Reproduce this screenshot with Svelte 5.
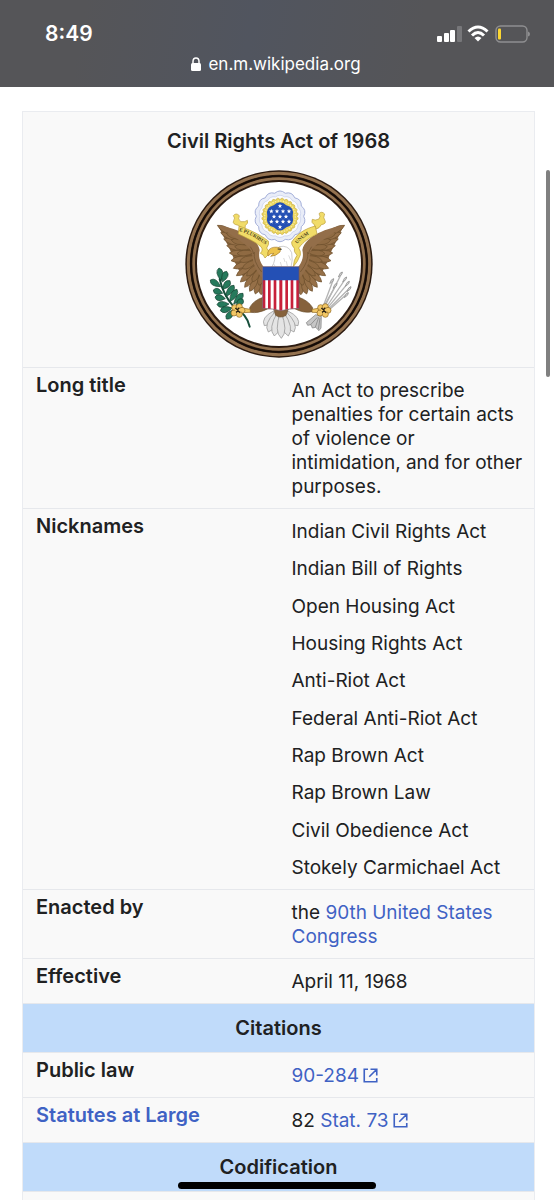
<script lang="ts">
  type Line = [number, number, number, number];

  const nicknames = [
    "Indian Civil Rights Act",
    "Indian Bill of Rights",
    "Open Housing Act",
    "Housing Rights Act",
    "Anti-Riot Act",
    "Federal Anti-Riot Act",
    "Rap Brown Act",
    "Rap Brown Law",
    "Civil Obedience Act",
    "Stokely Carmichael Act"
  ];

  // seal geometry, root -> tip
  const longFeathers: Line[] = [
    [250, 345, 246, 390], [245, 335, 229, 388], [242, 325, 212, 380],
    [238, 315, 197, 368], [235, 305, 184, 352], [232, 295, 172, 333],
    [228, 285, 163, 311], [224, 276, 156, 288], [220, 266, 151, 265],
    [215, 255, 143, 243], [208, 245, 134, 223], [200, 232, 125, 204],
    [190, 222, 115, 182]
  ];
  const shortFeathers: Line[] = [
    [252, 320, 240, 362], [246, 306, 220, 352], [243, 295, 203, 334],
    [240, 284, 190, 312], [236, 274, 182, 290], [230, 262, 174, 267],
    [222, 250, 167, 246], [210, 238, 157, 226], [195, 224, 142, 205]
  ];
  const tailFeathers: Line[] = [
    [285, 438, 256, 483], [325, 438, 357, 483], [290, 440, 268, 502],
    [320, 440, 345, 502], [296, 442, 286, 514], [314, 442, 328, 514],
    [305, 440, 307, 521]
  ];
  const leaves: Line[] = [
    [127, 348, 120, 310], [130, 352, 143, 320], [125, 366, 94, 346],
    [131, 374, 153, 348], [131, 386, 103, 376], [140, 396, 165, 362],
    [139, 402, 108, 397], [152, 412, 174, 374], [150, 418, 114, 420],
    [164, 418, 192, 386], [160, 430, 124, 438], [166, 434, 142, 463],
    [172, 424, 192, 404]
  ];
  const arrows: Line[] = [
    [424, 448, 464, 342], [426, 448, 490, 322], [428, 448, 503, 337],
    [430, 449, 511, 350], [431, 450, 516, 366], [432, 452, 508, 384],
    [422, 447, 474, 356]
  ];
  const stars = [
    [303, 124], [277, 140], [294, 140], [312, 140], [330, 140],
    [285, 156], [303, 156], [321, 156],
    [277, 171], [294, 171], [312, 171], [330, 171], [303, 187]
  ];

  function feather([x1, y1, x2, y2]: Line, w: number) {
    const len = Math.hypot(x2 - x1, y2 - y1);
    const nx = (-(y2 - y1) / len) * w;
    const ny = ((x2 - x1) / len) * w;
    const mx = x1 + (x2 - x1) * 0.75;
    const my = y1 + (y2 - y1) * 0.75;
    return `M${x1} ${y1}Q${mx + nx} ${my + ny} ${x2} ${y2}Q${mx - nx} ${my - ny} ${x1} ${y1}Z`;
  }

  function star(cx: number, cy: number) {
    const pts = [];
    for (let i = 0; i < 10; i++) {
      const r = i % 2 ? 3 : 7;
      const a = (i * Math.PI) / 5;
      pts.push(`${cx + r * Math.sin(a)},${cy - r * Math.cos(a)}`);
    }
    return pts.join(" ");
  }

  // scalloped circle used for the cloud, the rays and the blue field
  function scallop(cx: number, cy: number, r: number, n: number, bump: number) {
    let d = "";
    for (let i = 0; i <= n; i++) {
      const a = (i * 2 * Math.PI) / n;
      const m = a - Math.PI / n;
      const x = cx + r * Math.cos(a);
      const y = cy + r * Math.sin(a);
      d += i ? `Q${cx + (r + bump) * Math.cos(m)} ${cy + (r + bump) * Math.sin(m)} ${x} ${y}` : `M${x} ${y}`;
    }
    return d + "Z";
  }
</script>

{#snippet wing()}
  <path d="M117 182C165 195 226 220 238 262C236 285 246 300 256 318V385C215 372 175 325 160 270Z" fill="#86623c" />
  <g fill="#967048" stroke="#6b4e2c" stroke-width="2">
    {#each longFeathers as f}<path d={feather(f, 17)} />{/each}
  </g>
  <g fill="#8f6a42" stroke="#6b4e2c" stroke-width="2">
    {#each shortFeathers as f}<path d={feather(f, 17)} />{/each}
  </g>
  <path d="M117 182C165 190 232 212 242 256C236 280 246 296 258 312L250 340C228 318 218 284 220 264C200 232 150 210 117 182Z" fill="#936e49" />
  <path d="M226 262q-4 28 22 60M214 246q8 12 10 22" fill="none" stroke="#6b4e2c" stroke-width="2" />
{/snippet}

{#snippet talon(x: number)}
  <g transform="translate({x} 438)" fill="#f2c765" stroke="#8a6420" stroke-width="2">
    <circle cx="-10" cy="-9" r="9" /><circle cx="4" cy="-12" r="9" />
    <circle cx="12" cy="-1" r="9" /><circle cx="-12" cy="7" r="9" />
    <circle cx="4" cy="11" r="9" /><circle cx="0" cy="0" r="9" stroke="none" />
    <path d="M-8-8l6 5l6-6M-6 5l6-4l7 5M0-3v6" fill="none" stroke="#231c10" stroke-width="4" />
  </g>
{/snippet}

{#snippet external()}
  <svg class="external" viewBox="0 0 12 12" aria-hidden="true">
    <path d="M4 1H1v10h10V8M6 1h5v5M11 1L5 7" fill="none" stroke="currentColor" stroke-width="1.3" />
  </svg>
{/snippet}

<div class="screen">
  <header>
    <div class="status">
      <time>8:49</time>
      <div class="indicators">
        <svg width="25" height="16" viewBox="0 0 25 16" aria-label="Signal">
          <g fill="#fff">
            <rect y="10" width="5" height="6" rx="1" />
            <rect x="7" y="7" width="5" height="9" rx="1" />
            <rect x="13" y="4" width="5" height="12" rx="1" />
          </g>
          <rect x="20" width="5" height="16" rx="1" fill="#77777a" />
        </svg>
        <svg width="22" height="17" viewBox="0 0 22 17" aria-label="Wi-Fi">
          <g fill="none" stroke="#fff" stroke-width="3">
            <path d="M1.500 6.500Q11-2.500 20.500 6.500" />
            <path d="M5 10.500Q11 4.500 17 10.500" />
          </g>
          <path d="M7.500 13Q11 10 14.500 13L11 16.500Z" fill="#fff" />
        </svg>
        <svg width="36" height="18" viewBox="0 0 36 18" aria-label="Battery">
          <rect x="2" y="1" width="31" height="16" rx="4.500" fill="none" stroke="#8f8f91" stroke-width="1.400" />
          <rect x="4" y="3.500" width="3" height="11" rx="1" fill="#fbd632" />
          <path d="M34 6.500q2 .5 2 2.500t-2 2.500z" fill="#8f8f91" />
        </svg>
      </div>
    </div>
    <div class="address">
      <svg width="10" height="15" viewBox="0 0 10 15" aria-hidden="true">
        <rect y="6" width="10" height="8" rx="1.500" fill="#fff" />
        <path d="M2 7V4.500a3 3.500 0 0 1 6 0V7" fill="none" stroke="#fff" stroke-width="1.500" />
      </svg>
      <span>en.m.wikipedia.org</span>
    </div>
  </header>

  <main>
    <table>
      <tbody>
        <tr>
          <th class="title" colspan="2" scope="colgroup">
            Civil Rights Act of 1968
            <svg class="seal" viewBox="18 16 564 564" role="img" aria-label="Great Seal of the United States">
              <circle cx="300" cy="298" r="281" fill="#2b1a10" />
              <g fill="none" stroke="#94724f">
                <circle cx="300" cy="298" r="272" stroke-width="9" />
                <circle cx="300" cy="298" r="256" stroke-width="8" />
              </g>
              <circle cx="300" cy="298" r="264" fill="none" stroke="#140b06" stroke-width="5" />
              <circle cx="300" cy="298" r="246" fill="#fff" />

              <path d={scallop(303, 155, 71, 14, 12)} fill="#e9edf8" stroke="#a5b0da" stroke-width="3" />
              <path d={scallop(303, 155, 60, 14, 8)} fill="#fafbff" stroke="#c3cbe8" stroke-width="2" />
              <path d={scallop(303, 155, 50, 24, 10)} fill="#ead45f" stroke="#c8ad3d" stroke-width="2" />
              <circle cx="303" cy="155" r="46" fill="none" stroke="#f8eda5" stroke-width="4" stroke-dasharray="4 4" />
              <path d={scallop(303, 155, 38, 6, 14)} fill="#2450b5" />
              {#each stars as [x, y]}<polygon points={star(x, y)} fill="#fff" />{/each}

              {@render wing()}
              <g transform="matrix(-1 0 0 1 612 0)">{@render wing()}</g>

              <g fill="#f1dc68" stroke="#b99b36" stroke-width="2">
                <path d="M163 153q8-10 18 0q-6 10 4 18q14 2 20-4q4 10-6 15l-1 12q-14-2-20-12q-20-4-14-14q6-8-1-15z" />
                <path d="M180 184C205 193 238 206 268 229Q272 238 263 250Q266 258 276 266Q266 270 258 280Q253 268 244 266Q254 256 246 246C225 228 200 219 178 208Z" />
                <path d="M437 148q-9-10-17-1q6 8 0 16q-12 6-20 1q-4 12 6 15l3 15q13-3 18-14q16-3 11-12q-7-9-1-20z" />
                <path d="M409 184C378 192 355 207 338 232Q336 240 346 251Q343 261 354 272Q344 285 343 306Q356 292 364 271Q366 260 359 250C374 230 392 219 414 208Z" />
              </g>
              <path id="motto-left" d="M180 199Q226 212 270 249" fill="none" />
              <path id="motto-right" d="M354 238Q376 212 414 199" fill="none" />
              <g class="motto">
                <text><textPath href="#motto-left">E PLURIBUS</textPath></text>
                <text><textPath href="#motto-right">UNUM</textPath></text>
              </g>

              <path d="M278 308Q292 284 286 266L300 246Q328 240 338 264Q342 286 336 308Z" fill="#fff" stroke="#b5b5b5" stroke-width="2" />
              <path d="M284 298l5 8M304 292l4 14M322 290l3 14M329 272l6 15M314 280l4 12" stroke="#c9c9c9" stroke-width="2" />
              <path d="M305 250Q282 243 270 255Q264 264 267 274Q274 265 285 266L275 275Q292 274 303 262Z" fill="#edc34c" stroke="#a67a24" stroke-width="2" />
              <path d="M296 253l12 1" stroke="#333" stroke-width="3" />

              <g fill="#e4e4e4" stroke="#8d8d8d" stroke-width="2">
                {#each tailFeathers as f}<path d={feather(f, 23)} />{/each}
              </g>
              <path d="M252 398Q222 408 212 429L214 443Q238 447 267 432L284 431L290 452Q305 462 321 452L328 432L345 431Q374 447 399 441L401 429Q388 408 360 398Z" fill="#86623c" stroke="#6b4e2c" stroke-width="2" />
              <path d="M189 430l25 4v9l-25 1zM424 430l-25 4v9l25 1z" fill="#f2c765" stroke="#8a6420" stroke-width="2" />

              <path d="M251 306H360V431Q330 432 306 438Q282 432 251 431Z" fill="#fff" />
              <g fill="#c8203a">
                <path d="M251 346h8v85h-8zM267 346h8v86h-8zM284 346h8v89l-8-1zM301 346h9v91l-4 1l-5-1zM319 346h8v88l-8 1zM335 346h8v86h-8zM352 346h8v85h-8z" />
              </g>
              <path d="M251 306H360V347H251Z" fill="#2450b5" />
              <path d="M251 306H360V431Q330 432 306 438Q282 432 251 431Z" fill="none" stroke="#6e5360" stroke-width="2" />

              <path d="M122 343Q132 390 164 426Q205 450 212 486" fill="none" stroke="#174f3b" stroke-width="6" stroke-linecap="round" />
              <g fill="#267a5c" stroke="#103c2c" stroke-width="2">
                {#each leaves as l}<path d={feather(l, 18)} />{/each}
              </g>

              {#each arrows as a}
                <path d="M{a[0]} {a[1]}L{a[2]} {a[3]}" stroke="#b4b4b4" stroke-width="4" />
                <path d={feather([a[2] - 12, a[3] + 15, a[2], a[3]], 6)} fill="#d7d7d7" stroke="#8a8a8a" stroke-width="2" />
              {/each}
              <path d="M410 450L382 474L386 482L396 480L400 490L410 488L420 498L426 490L427 455Z" fill="#c6c6c6" stroke="#777" stroke-width="2" />
              <path d="M415 458l-20 22M419 458l-10 30M423 460l-5 34" stroke="#777" stroke-width="2" />
              {@render talon(177)}
              {@render talon(435)}
            </svg>
          </th>
        </tr>
        <tr>
          <th scope="row">Long title</th>
          <td>An Act to prescribe penalties for certain acts of violence or intimidation, and for other purposes.</td>
        </tr>
        <tr>
          <th scope="row">Nicknames</th>
          <td>
            <ul>
              {#each nicknames as name (name)}
                <li>{name}</li>
              {/each}
            </ul>
          </td>
        </tr>
        <tr>
          <th scope="row">Enacted by</th>
          <td>the <a href="#congress">90th United States Congress</a></td>
        </tr>
        <tr>
          <th scope="row">Effective</th>
          <td>April 11, 1968</td>
        </tr>
        <tr>
          <th class="section" colspan="2" scope="colgroup">Citations</th>
        </tr>
        <tr>
          <th scope="row">Public law</th>
          <td><a href="#public-law">90-284{@render external()}</a></td>
        </tr>
        <tr>
          <th scope="row"><a href="#statutes">Statutes at Large</a></th>
          <td>82 <a href="#stat">Stat.</a> <a href="#stat-73">73{@render external()}</a></td>
        </tr>
        <tr>
          <th class="section" colspan="2" scope="colgroup">Codification</th>
        </tr>
        <tr>
          <td class="rest" colspan="2"></td>
        </tr>
      </tbody>
    </table>
  </main>

  <div class="scrollbar"></div>
  <div class="home"></div>
</div>

<style>
  :global(body) {
    margin: 0;
    background: #fff;
  }
  .screen {
    position: relative;
    height: 100vh;
    overflow: hidden;
    font-family: Inter, Roboto, "Liberation Sans", sans-serif;
    font-size: 19px;
    line-height: 24px;
    color: #202122;
  }
  header {
    padding: 21px 24px 11px 45px;
    color: #fff;
    background: linear-gradient(100deg, #555558 15%, #51555f 45%, #555558 75%);
  }
  .status {
    display: flex;
    align-items: center;
    justify-content: space-between;
    height: 25px;
  }
  time {
    font-size: 21px;
    font-weight: 600;
  }
  .indicators {
    display: flex;
    align-items: center;
    gap: 5px;
  }
  .address {
    display: flex;
    align-items: center;
    justify-content: center;
    gap: 7px;
    margin: 6px 23px 0 0;
    font-size: 17px;
  }
  main {
    padding: 24px 19px 0 22px;
  }
  table {
    width: 100%;
    table-layout: fixed;
    border-collapse: separate;
    border-spacing: 0;
    border: 1px solid #eaecf0;
    background: #f9f9f9;
  }
  th,
  td {
    box-sizing: border-box;
    padding: 11px 8px 9px 13px;
    border-bottom: 1px solid #e6e8ec;
    text-align: left;
    vertical-align: top;
  }
  th {
    padding-top: 5px;
    font-size: 20px;
    font-weight: 600;
  }
  .title {
    padding: 17px 14px 9px;
    text-align: center;
  }
  .seal {
    display: block;
    width: 188px;
    margin: 17px auto 0;
  }
  .motto {
    font-family: "Liberation Serif", serif;
    font-size: 15px;
    font-weight: 700;
    fill: #4b431c;
  }
  ul {
    display: flex;
    flex-direction: column;
    justify-content: space-between;
    min-height: 360px;
    margin: 0;
    padding: 0;
    list-style: none;
  }
  a {
    color: #3f62c4;
    text-decoration: none;
  }
  .section {
    padding: 12px 14px;
    text-align: center;
    background: #c0dbfa;
  }
  .external {
    width: 15px;
    height: 15px;
    margin-left: 4px;
    vertical-align: -1px;
  }
  .rest {
    height: 45px;
  }
  .scrollbar {
    position: absolute;
    top: 170px;
    right: 4px;
    width: 4px;
    height: 207px;
    border-radius: 2px;
    background: #808080;
  }
  .home {
    position: absolute;
    bottom: 11px;
    left: 50%;
    width: 198px;
    height: 7px;
    border-radius: 4px;
    background: #000;
    transform: translateX(-50%);
  }
</style>
